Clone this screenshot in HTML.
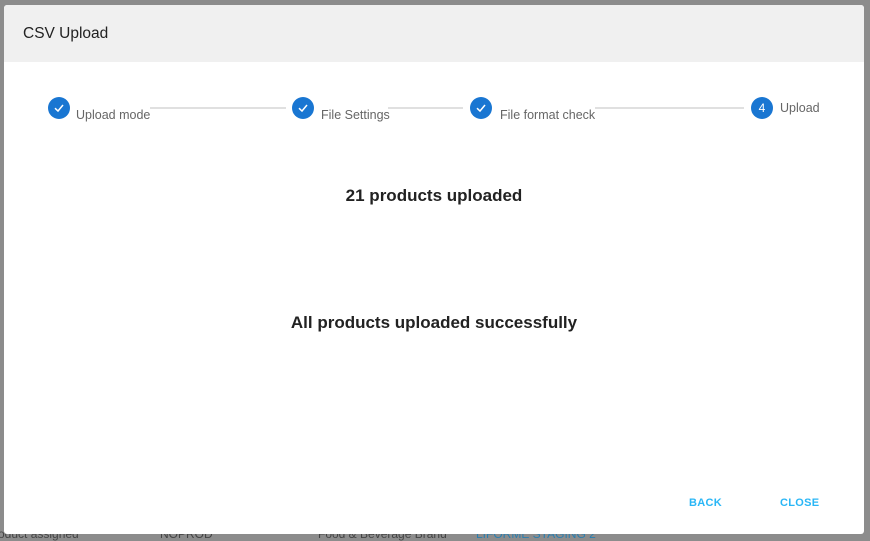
<!DOCTYPE html>
<html><head><style>
body{margin:0;width:870px;height:539px;background:#8c8c8c;position:relative;overflow:hidden;font-family:"Liberation Sans",sans-serif}
.d{position:absolute;left:4px;top:5px;width:860px;height:529px;background:#fff;border-radius:3px;overflow:hidden}
.h{height:57px;background:#f0f0f0;font-size:15.5px;color:#222;padding-left:19px;line-height:57px}
.c{position:absolute;width:22px;height:22px;border-radius:50%;background:#1976d2;top:92px;color:#fff;font-size:12px;text-align:center;line-height:22px}
.c svg{position:absolute;left:6px;top:6px}
.l{position:absolute;top:102px;height:2px;background:#e0e0e0}
.t{position:absolute;font-size:12.5px;color:#666}
.m{position:absolute;left:0;width:860px;text-align:center;font-size:17px;color:#222;font-weight:bold}
.b{position:absolute;top:492px;font-size:11px;color:#29b6f6;font-weight:bold;letter-spacing:.3px}
.bg{position:absolute;font-size:12px;color:#444}
</style></head><body>
<div class="bg" style="left:-2px;top:527px">oduct assigned</div>
<div class="bg" style="left:160px;top:527px">NOPROD</div>
<div class="bg" style="left:318px;top:527px">Food &amp; Beverage Brand</div>
<div class="bg" style="left:476px;top:527px;color:#2a7fb0">LIFORME STAGING 2</div>
<div class="d">
<div class="h">CSV Upload</div>
<div class="c" style="left:44px"><svg width="10" height="10" viewBox="0 0 10 10"><path d="M1 5.2 L4 8 L9 2" stroke="#fff" stroke-width="1.5" fill="none"/></svg></div>
<div class="t" style="left:72px;top:103px">Upload mode</div>
<div class="l" style="left:146px;width:136px"></div>
<div class="c" style="left:288px"><svg width="10" height="10" viewBox="0 0 10 10"><path d="M1 5.2 L4 8 L9 2" stroke="#fff" stroke-width="1.5" fill="none"/></svg></div>
<div class="t" style="left:317px;top:103px">File Settings</div>
<div class="l" style="left:384px;width:75px"></div>
<div class="c" style="left:466px"><svg width="10" height="10" viewBox="0 0 10 10"><path d="M1 5.2 L4 8 L9 2" stroke="#fff" stroke-width="1.5" fill="none"/></svg></div>
<div class="t" style="left:496px;top:103px">File format check</div>
<div class="l" style="left:591px;width:149px"></div>
<div class="c" style="left:747px">4</div>
<div class="t" style="left:776px;top:96px">Upload</div>
<div class="m" style="top:181px">21 products uploaded</div>
<div class="m" style="top:308px">All products uploaded successfully</div>
<div class="b" style="left:685px">BACK</div>
<div class="b" style="left:776px">CLOSE</div>
</div>
</body></html>
